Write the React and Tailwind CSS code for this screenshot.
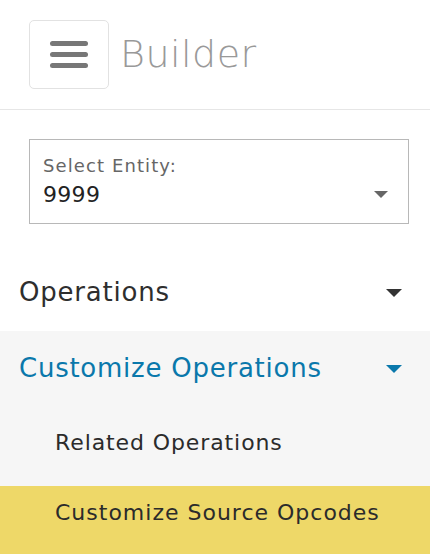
const font = { fontFamily: '"DejaVu Sans", "Open Sans", sans-serif' };

function Caret({ className }) {
	return (
		<svg width="16" height="8" viewBox="0 0 16 8" className={className}>
			<path d="M0 0 L16 0 L8 8 Z" fill="currentColor" />
		</svg>
	);
}

export default function App() {
	return (
		<div className="w-[430px] h-[554px] overflow-hidden bg-white" style={font}>
			<header className="flex items-center gap-[11px] h-[110px] pl-[29px] border-b border-[#e6e6e6]">
				<button className="flex flex-col justify-center items-center gap-[6px] w-[80px] h-[69px] border border-[#e2e2e2] rounded-[5px] bg-white">
					<span className="block w-[38px] h-[5px] rounded-full bg-[#777]"></span>
					<span className="block w-[38px] h-[5px] rounded-full bg-[#777]"></span>
					<span className="block w-[38px] h-[5px] rounded-full bg-[#777]"></span>
				</button>
				<span className="text-[38px] font-extralight text-[#999] tracking-[0.5px]">Builder</span>
			</header>

			<div className="pl-[29px] pr-[21px] pt-[29px]">
				<div className="flex flex-col justify-center h-[85px] px-[13px] border border-[#b8b8b8]">
					<span className="text-[18px] text-[#666] leading-[22px] tracking-[1.1px]">Select Entity:</span>
					<div className="flex items-center justify-between mt-[4px]">
						<span className="text-[22px] text-[#222] leading-[28px] tracking-[0.3px]">9999</span>
						<Caret className="text-[#666] w-[14px] h-[7px] mr-[7px]" />
					</div>
				</div>
			</div>

			<nav className="mt-[30px]">
				<div className="flex items-center justify-between h-[77px] pl-[19px] pr-[28px]">
					<span className="text-[26px] text-[#2e2e2e] tracking-[0.8px]">Operations</span>
					<Caret className="text-[#333]" />
				</div>
				<div className="bg-[#f6f6f6]">
					<div className="flex items-center justify-between h-[75px] pl-[19px] pr-[28px]">
						<span className="text-[26px] text-[#0a78ab] tracking-[0.75px]">Customize Operations</span>
						<Caret className="text-[#0a78ab]" />
					</div>
					<div className="flex items-center h-[74px] pl-[55px] pb-[2px]">
						<span className="text-[22px] text-[#2b2b2b] tracking-[0.9px]">Related Operations</span>
					</div>
					<div className="h-[6px]"></div>
					<div className="flex items-start h-[80px] pl-[55px] pt-[12px] bg-[#eed868]">
						<span className="text-[22px] text-[#2b2b2b] tracking-[1px] leading-[30px]">Customize Source Opcodes</span>
					</div>
				</div>
			</nav>
		</div>
	);
}
